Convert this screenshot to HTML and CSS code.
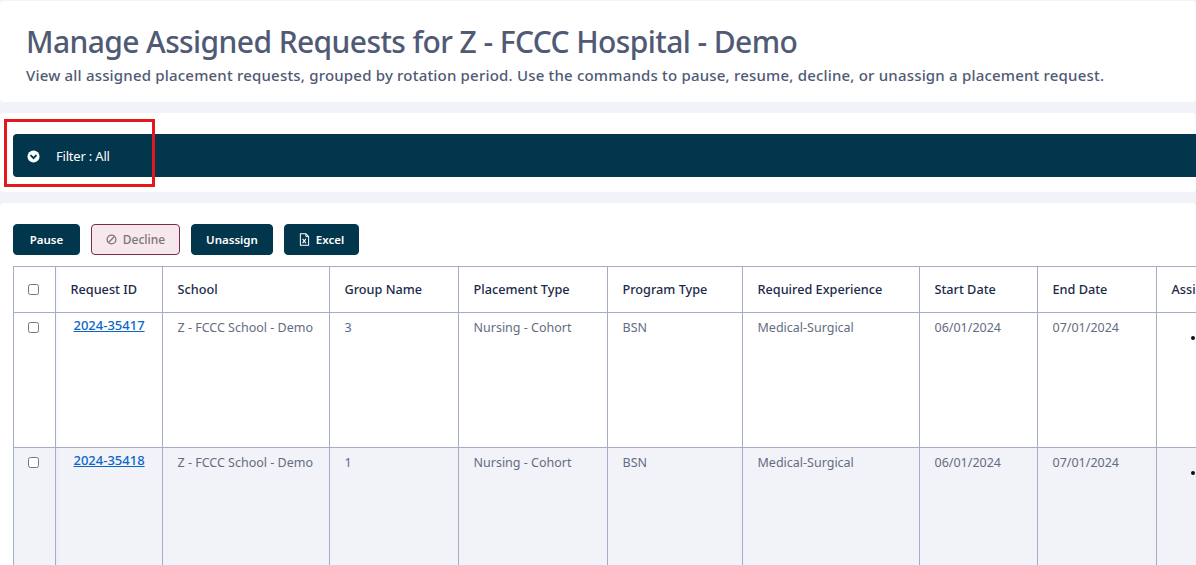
FILE: index.html
```html
<!DOCTYPE html>
<html lang="en">
<head>
<meta charset="utf-8">
<title>Manage Assigned Requests</title>
<link rel="stylesheet" href="styles.css">
</head>
<body>
<div class="page">
  <header class="card head">
    <h1>Manage Assigned Requests for Z - FCCC Hospital - Demo</h1>
    <p>View all assigned placement requests, grouped by rotation period. Use the commands to pause, resume, decline, or unassign a placement request.</p>
  </header>
  <section class="card filter-card">
    <div class="filter-bar">
      <svg class="chev" viewBox="0 0 14 14" width="13" height="13"><circle cx="7" cy="7" r="6.5" fill="#fff"/><path d="M3.8 5.6 7 8.8l3.2-3.2" fill="none" stroke="#02364c" stroke-width="2"/></svg>
      <span>Filter : All</span>
    </div>
    <div class="callout"></div>
  </section>
  <section class="card main">
    <div class="toolbar">
      <button class="btn b-pause">Pause</button>
      <button class="btn b-decline"><svg viewBox="0 0 12 12" width="11" height="11"><circle cx="6" cy="6" r="4.8" fill="none" stroke="#7d7478" stroke-width="1.4"/><path d="M2.8 9.2l6.4-6.4" stroke="#7d7478" stroke-width="1.4"/></svg>Decline</button>
      <button class="btn b-unassign">Unassign</button>
      <button class="btn b-excel"><svg viewBox="0 0 12 14" width="11" height="13"><path d="M1.5.8h6l3 3v9.4h-9z" fill="none" stroke="#fff" stroke-width="1.1"/><path d="M7.5.8v3h3" fill="none" stroke="#fff" stroke-width="1"/><path d="M3.9 6.4l3.6 4.6M7.5 6.4l-3.6 4.6" stroke="#fff" stroke-width="1.2"/></svg>Excel</button>
    </div>
    <table>
      <colgroup>
        <col class="c-check"><col class="c-id"><col class="c-school"><col class="c-group"><col class="c-place"><col class="c-prog"><col class="c-exp"><col class="c-date"><col class="c-date2"><col class="c-assign">
      </colgroup>
      <thead>
        <tr>
          <th class="chk"><input type="checkbox"></th>
          <th class="shade">Request ID</th><th>School</th><th>Group Name</th><th>Placement Type</th><th>Program Type</th><th>Required Experience</th><th>Start Date</th><th>End Date</th><th>Assigned</th>
        </tr>
      </thead>
      <tbody>
        <tr>
          <td class="chk"><input type="checkbox"></td>
          <td class="rid shade"><a href="#">2024-35417</a></td>
          <td>Z - FCCC School - Demo</td><td class="num">3</td><td>Nursing - Cohort</td><td>BSN</td><td>Medical-Surgical</td><td>06/01/2024</td><td>07/01/2024</td>
          <td><ul><li></li></ul></td>
        </tr>
        <tr class="alt">
          <td class="chk"><input type="checkbox"></td>
          <td class="rid shade"><a href="#">2024-35418</a></td>
          <td>Z - FCCC School - Demo</td><td class="num">1</td><td>Nursing - Cohort</td><td>BSN</td><td>Medical-Surgical</td><td>06/01/2024</td><td>07/01/2024</td>
          <td><ul><li></li></ul></td>
        </tr>
      </tbody>
    </table>
  </section>
</div>
</body>
</html>
```

FILE: styles.css
```css
* { box-sizing: border-box; }
html, body { margin: 0; height: 100%; overflow: hidden; }
body { background: #f1f3f9; font-family: "Noto Sans", "Open Sans", sans-serif; color: #4f5a74; }
.page { padding-top: 1px; display: flex; flex-direction: column; gap: 11px; width: 1196px; }
.card { background: #fff; border-radius: 4px; }
.head { height: 101px; padding: 21px 26px 0; }
h1 { margin: 0; font-size: 30px; line-height: 40px; font-weight: 500; letter-spacing: -0.6px; color: #505a75; white-space: nowrap; }
.head p { margin: 3px 0 0; font-size: 15px; line-height: 20px; font-weight: 500; letter-spacing: 0.19px; color: #505a75; white-space: nowrap; }
.filter-card { position: relative; height: 79px; padding: 21px 0 0 13px; overflow: hidden; }
.filter-bar { height: 43px; background: #02364c; border-radius: 4px 0 0 4px; display: flex; align-items: center; gap: 16px; padding: 1px 0 0 14px; color: #fff; font-size: 13px; }
.filter-bar span { letter-spacing: -0.2px; }
.callout { position: absolute; left: 4px; top: 6px; width: 151px; height: 68px; border: 3px solid #e3181f; }
.main { flex: none; height: 400px; padding: 21px 0 0 13px; overflow: hidden; }
.toolbar { display: flex; gap: 11px; height: 31px; margin-bottom: 11px; }
.btn { height: 31px; padding: 0; border: 1px solid #02364c; border-radius: 4px; background: #02364c; color: #fff; font: 600 11.5px "Noto Sans", sans-serif; display: inline-flex; align-items: center; justify-content: center; gap: 6px; }
.b-pause { width: 67px; }
.b-decline { width: 89px; background: #f6e8ec; border-color: #7c2b48; color: #7d7478; font-size: 12px; font-weight: 500; }
.b-unassign { width: 82px; }
.b-excel { width: 75px; gap: 6px; }
table { border-collapse: collapse; table-layout: fixed; width: 1263px; font-size: 12.5px; }
.c-check { width: 42px; }
.c-id { width: 107px; }
.c-school { width: 167px; }
.c-group { width: 129px; }
.c-place { width: 149px; }
.c-prog { width: 135px; }
.c-exp { width: 177px; }
.c-date { width: 118px; }
.c-date2 { width: 119px; }
.c-assign { width: 120px; }
th, td { border: 1px solid #a3adc4; padding: 0 14.5px; text-align: left; white-space: nowrap; overflow: hidden; }
th { height: 46px; padding-bottom: 2px; font-size: 12.7px; font-weight: 500; color: #1b2a48; }
td { height: 135px; vertical-align: top; padding-top: 6px; line-height: 17px; color: #646c80; }
.num { color: #5a6a8e; }
.alt td { background: #f1f3f9; }
.chk { padding: 0; text-align: center; }
th.chk { padding: 0; }
th.chk input { margin: 0 1.5px 0 0; }
td.chk input { margin: 9px 1.5px 0 0; }
input[type=checkbox] { width: 11px; height: 11px; accent-color: #02364c; }
td.rid { padding: 4px 0 0 17.5px; font-size: 13px; }
.shade, .alt td.shade { background-image: linear-gradient(to right, rgba(20, 30, 60, .045), transparent 3px); }
a { color: #0b66c8; text-decoration: underline; font-weight: 500; }
ul { margin: 10px 0 0; padding: 0 0 0 34px; color: #111; }
li { height: 17px; }
```
